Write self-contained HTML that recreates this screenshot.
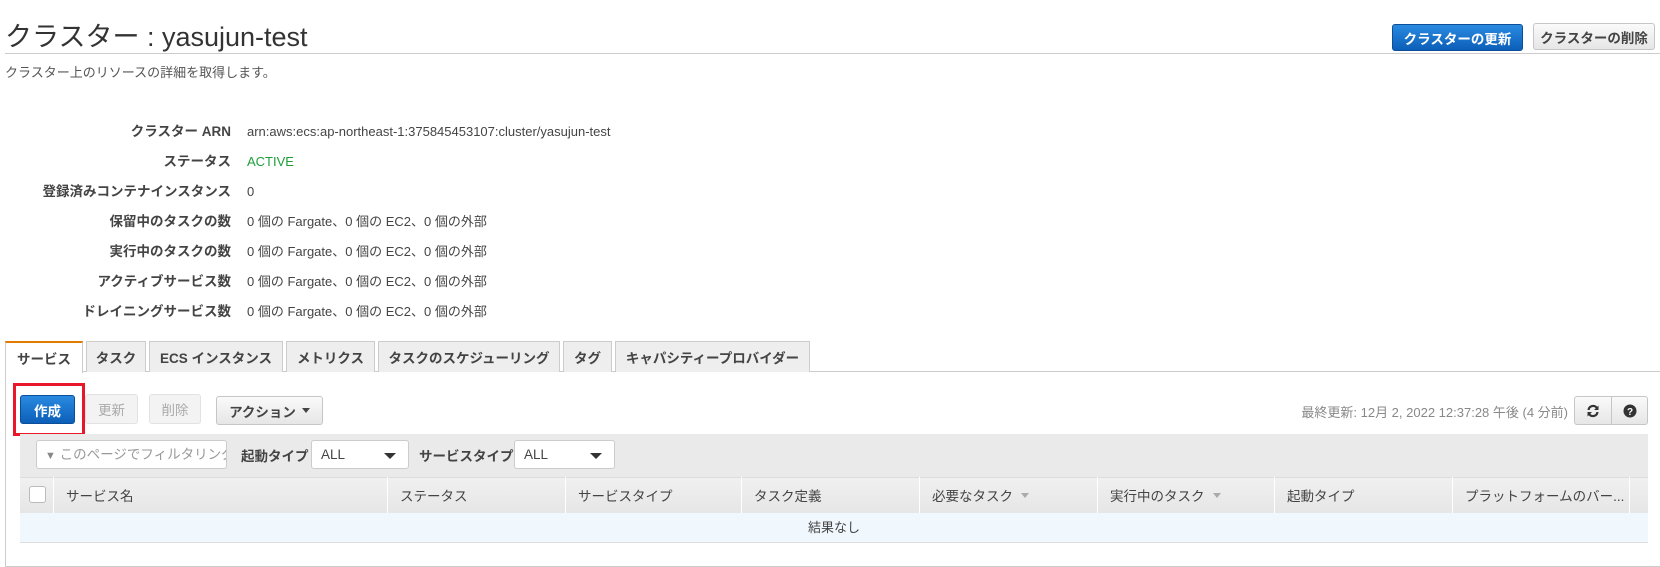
<!DOCTYPE html>
<html><head><meta charset="utf-8"><style>
*{box-sizing:border-box;margin:0;padding:0}
body{width:1660px;height:567px;position:relative;overflow:hidden;background:#fff;font-family:"Liberation Sans","Noto Sans CJK JP",sans-serif;color:#444;font-size:13.5px}
.a{position:absolute;white-space:nowrap}
.btn{position:absolute;border:1px solid #c6c6c6;border-radius:3px;background:linear-gradient(#fafafa,#e6e6e6);display:flex;align-items:center;justify-content:center;font-weight:bold;font-size:13.5px;color:#444}
.pri{background:linear-gradient(#2a8ae0,#0c5fb8);border-color:#0b4f9a;color:#fff}
.dis{color:#aaa;background:#f3f3f3;border-color:#e2e2e2;font-weight:normal}
.lab{position:absolute;right:1429px;font-weight:bold;white-space:nowrap;line-height:16px;transform:translateY(-50%)}
.val{position:absolute;left:247px;white-space:nowrap;font-size:13px;line-height:16px;transform:translateY(-50%)}
.tab{position:absolute;top:341px;height:31px;border:1px solid #ccc;border-bottom:none;background:#eee;display:flex;align-items:center;justify-content:center;font-weight:bold;font-size:13.5px;color:#444}
.sel{position:absolute;top:440px;height:29px;background:#fff;border:1px solid #ccc;border-radius:3px;padding-left:9px;display:flex;align-items:center;font-size:13.5px}
.sel:after{content:"";position:absolute;right:12px;top:12px;border-left:6px solid transparent;border-right:6px solid transparent;border-top:6px solid #333}
.hd{position:absolute;top:477px;height:36px;border-left:1px solid #fff;display:flex;align-items:center;padding-left:12px;font-size:13.5px;color:#444}
.car{display:inline-block;margin-left:8px;border-left:4px solid transparent;border-right:4px solid transparent;border-top:5px solid #aaa}
</style></head><body>
<div class="a" style="left:5px;top:15px;font-size:27px;color:#333">クラスター : yasujun-test</div>
<div class="a" style="left:5px;top:53px;width:1655px;height:1px;background:#ccc"></div>
<div class="a" style="left:5px;top:62px;font-size:13px;color:#555">クラスター上のリソースの詳細を取得します。</div>
<div class="btn pri" style="left:1392px;top:24px;width:131px;height:27px">クラスターの更新</div>
<div class="btn" style="left:1533px;top:23px;width:122px;height:27px">クラスターの削除</div>

<div class="lab" style="top:132px">クラスター ARN</div><div class="val" style="top:132px">arn:aws:ecs:ap-northeast-1:375845453107:cluster/yasujun-test</div>
<div class="lab" style="top:162px">ステータス</div><div class="val" style="top:162px;color:#1d9e3b">ACTIVE</div>
<div class="lab" style="top:192px">登録済みコンテナインスタンス</div><div class="val" style="top:192px">0</div>
<div class="lab" style="top:222px">保留中のタスクの数</div><div class="val" style="top:222px">0 個の Fargate、0 個の EC2、0 個の外部</div>
<div class="lab" style="top:252px">実行中のタスクの数</div><div class="val" style="top:252px">0 個の Fargate、0 個の EC2、0 個の外部</div>
<div class="lab" style="top:282px">アクティブサービス数</div><div class="val" style="top:282px">0 個の Fargate、0 個の EC2、0 個の外部</div>
<div class="lab" style="top:312px">ドレイニングサービス数</div><div class="val" style="top:312px">0 個の Fargate、0 個の EC2、0 個の外部</div>

<div class="a" style="left:5px;top:371px;width:1655px;height:1px;background:#ccc"></div>
<div class="a" style="left:5px;top:371px;width:1px;height:196px;background:#ccc"></div>
<div class="a" style="left:5px;top:566px;width:1655px;height:1px;background:#ccc"></div>
<div class="tab" style="left:5px;width:78px;background:#fff;border-top:2px solid #e07b00;height:32px">サービス</div>
<div class="tab" style="left:86px;width:60px">タスク</div>
<div class="tab" style="left:149px;width:134px">ECS インスタンス</div>
<div class="tab" style="left:286px;width:89px">メトリクス</div>
<div class="tab" style="left:378px;width:182px">タスクのスケジューリング</div>
<div class="tab" style="left:563px;width:49px">タグ</div>
<div class="tab" style="left:615px;width:195px">キャパシティープロバイダー</div>

<div class="a" style="left:13px;top:383px;width:72px;height:53px;border:3px solid #e8182a"></div>
<div class="btn pri" style="left:20px;top:395px;width:55px;height:29px">作成</div>
<div class="btn dis" style="left:85px;top:394px;width:53px;height:30px">更新</div>
<div class="btn dis" style="left:149px;top:394px;width:52px;height:30px">削除</div>
<div class="btn" style="left:216px;top:396px;width:107px;height:29px">アクション <span style="display:inline-block;margin-left:6px;border-left:4px solid transparent;border-right:4px solid transparent;border-top:5px solid #444"></span></div>
<div class="a" style="right:92px;top:402px;color:#888;font-size:13px">最終更新: 12月 2, 2022 12:37:28 午後 (4 分前)</div>
<div class="btn" style="left:1574px;top:396px;width:38px;height:29px;border-radius:3px 0 0 3px">
<svg width="14" height="14" viewBox="0 0 14 14"><path d="M2.5 6A4.6 4.6 0 0 1 11 4.2M11.5 8A4.6 4.6 0 0 1 3 9.8" stroke="#333" stroke-width="2.2" fill="none"/><path d="M12.5 1.5v4.5H8zM1.5 12.5V8H6z" fill="#333"/></svg></div>
<div class="btn" style="left:1611px;top:396px;width:37px;height:29px;border-radius:0 3px 3px 0">
<svg width="14" height="14" viewBox="0 0 14 14"><circle cx="7" cy="7" r="6.5" fill="#333"/><text x="7" y="11" font-size="10" font-weight="bold" fill="#fff" text-anchor="middle" font-family="Liberation Sans">?</text></svg></div>

<div class="a" style="left:20px;top:434px;width:1628px;height:43px;background:#eaeaea"></div>
<div class="a" style="left:36px;top:440px;width:191px;height:29px;background:#fff;border:1px solid #ccc;border-radius:3px;padding-left:8px;line-height:27px;color:#999;font-size:13.5px;overflow:hidden"><span style="font-size:11px;color:#888">▼</span> このページでフィルタリング</div>
<div class="a" style="left:241px;top:445px;font-weight:bold">起動タイプ</div>
<div class="sel" style="left:311px;width:98px">ALL</div>
<div class="a" style="left:419px;top:445px;font-weight:bold">サービスタイプ</div>
<div class="sel" style="left:514px;width:101px">ALL</div>

<div class="a" style="left:20px;top:477px;width:1628px;height:36px;background:linear-gradient(#f0f0f0,#e6e6e6);border-top:1px solid #ddd"></div>
<div class="a" style="left:29px;top:486px;width:17px;height:17px;background:#fff;border:1px solid #bbb;border-radius:3px"></div>
<div class="hd" style="left:53px;width:334px">サービス名</div>
<div class="hd" style="left:387px;width:178px">ステータス</div>
<div class="hd" style="left:565px;width:176px">サービスタイプ</div>
<div class="hd" style="left:741px;width:178px">タスク定義</div>
<div class="hd" style="left:919px;width:178px">必要なタスク<span class="car"></span></div>
<div class="hd" style="left:1097px;width:177px">実行中のタスク<span class="car"></span></div>
<div class="hd" style="left:1274px;width:178px">起動タイプ</div>
<div class="hd" style="left:1452px;width:177px">プラットフォームのバー...</div>
<div class="hd" style="left:1629px;width:19px"></div>
<div class="a" style="left:20px;top:513px;width:1628px;height:30px;background:#f0f7fd;border-bottom:1px solid #ddd;text-align:center;line-height:30px;font-size:13px">結果なし</div>
</body></html>
